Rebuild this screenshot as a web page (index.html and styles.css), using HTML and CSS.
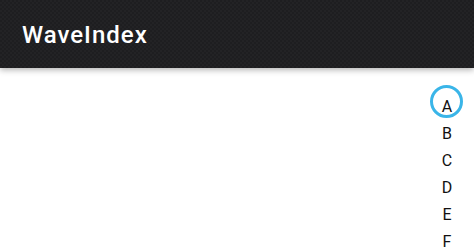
FILE: index.html
```html
<!DOCTYPE html>
<html>
<head>
<meta charset="utf-8">
<link rel="stylesheet" href="styles.css">
</head>
<body>
<div class="app">
  <header class="toolbar">
    <h1 class="title">WaveIndex</h1>
  </header>
  <main class="content">
    <ul class="index">
      <li class="letter active">A</li>
      <li class="letter">B</li>
      <li class="letter">C</li>
      <li class="letter">D</li>
      <li class="letter">E</li>
      <li class="letter">F</li>
    </ul>
  </main>
</div>
</body>
</html>
```
FILE: styles.css
```css
html, body {
  margin: 0;
  padding: 0;
  background: #ffffff;
  overflow: hidden;
}
.app {
  width: 474px;
  height: 248px;
  display: flex;
  flex-direction: column;
  font-family: Roboto, "Liberation Sans", sans-serif;
}
.toolbar {
  height: 68px;
  flex: none;
  background-color: #1e1e20;
  background-image:
    linear-gradient(45deg, rgba(255,255,255,0.025) 25%, transparent 25%, transparent 75%, rgba(255,255,255,0.025) 75%),
    linear-gradient(45deg, rgba(255,255,255,0.025) 25%, transparent 25%, transparent 75%, rgba(255,255,255,0.025) 75%);
  background-size: 4px 4px;
  background-position: 0 0, 2px 2px;
  display: flex;
  align-items: center;
  padding-left: 22px;
  box-shadow: 0 2px 6px rgba(0,0,0,0.3);
  position: relative;
  z-index: 1;
}
.title {
  margin: 0;
  color: #ffffff;
  font-size: 24px;
  font-weight: 500;
  letter-spacing: 1px;
  line-height: 1;
  margin-top: 1px;
}
.content {
  flex: 1;
  display: flex;
  justify-content: flex-end;
  background: #ffffff;
}
.index {
  list-style: none;
  margin: 0;
  padding: 25px 0 0;
  width: 56px;
  display: flex;
  flex-direction: column;
  align-items: center;
}
.letter {
  height: 27px;
  line-height: 27px;
  font-size: 16px;
  color: #111111;
  position: relative;
  width: 20px;
  text-align: center;
  margin-left: 2px;
}
.letter.active::before {
  content: "";
  position: absolute;
  left: 50%;
  top: 50%;
  width: 27px;
  height: 27px;
  margin-left: -17.5px;
  margin-top: -22px;
  border: 3px solid #3ab5e8;
  border-radius: 50%;
}
```
